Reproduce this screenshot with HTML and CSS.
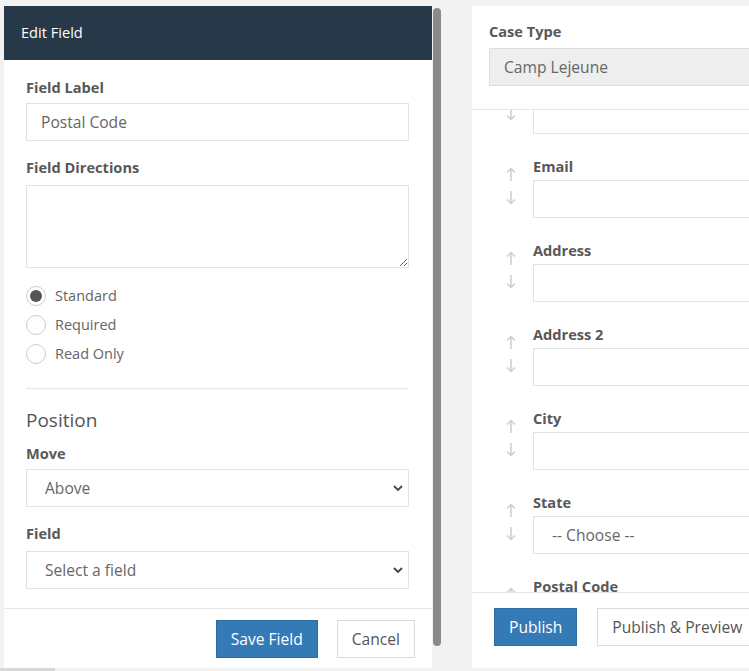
FILE: index.html
```html
<!DOCTYPE html>
<html>
<head>
<meta charset="utf-8">
<title>Edit Field</title>
<link rel="stylesheet" href="styles.css">
</head>
<body>
<div class="page">
  <div class="left-wrap">
    <div class="panel edit-panel">
      <div class="panel-head">Edit Field</div>
      <div class="panel-body">
        <label class="lbl">Field Label</label>
        <input class="ctl" type="text" value="Postal Code">
        <label class="lbl lbl-gap lbl-ta">Field Directions</label>
        <textarea class="ctl ta"></textarea>
        <div class="radios">
          <div class="radio"><span class="dot on"></span>Standard</div>
          <div class="radio"><span class="dot"></span>Required</div>
          <div class="radio"><span class="dot"></span>Read Only</div>
        </div>
        <div class="sep"></div>
        <div class="sect">Position</div>
        <label class="lbl lbl-move">Move</label>
        <div class="ctl sel"><span>Above</span><svg class="chev" width="10" height="6" viewBox="0 0 10 6"><polyline points="1,1 5,5 9,1" fill="none" stroke="#444" stroke-width="1.8"/></svg></div>
        <label class="lbl lbl-gap lbl-field">Field</label>
        <div class="ctl sel"><span>Select a field</span><svg class="chev" width="10" height="6" viewBox="0 0 10 6"><polyline points="1,1 5,5 9,1" fill="none" stroke="#444" stroke-width="1.8"/></svg></div>
      </div>
      <div class="panel-foot">
        <button class="btn btn-primary">Save Field</button>
        <button class="btn">Cancel</button>
      </div>
    </div>
    <div class="vscroll"><div class="thumb"></div></div>
  </div>

  <div class="panel form-panel">
    <div class="form-top">
      <label class="lbl lbl-case">Case Type</label>
      <div class="ctl ro"><span>Camp Lejeune</span></div>
    </div>
    <div class="form-scroll">
      <div class="rows">
        <div class="row">
          <div class="arrows">
            <svg class="arr" width="12" height="15" viewBox="0 0 12 15"><path d="M6 14V1.5M2 5.5L6 1.5l4 4" fill="none" stroke="#cdcdcd" stroke-width="1.5"/></svg>
            <svg class="arr" width="12" height="15" viewBox="0 0 12 15"><path d="M6 1v12.5M2 9.5l4 4 4-4" fill="none" stroke="#cdcdcd" stroke-width="1.5"/></svg>
          </div>
          <div class="fld"><label class="lbl">Phone</label><div class="ctl box"></div></div>
        </div>
        <div class="row">
          <div class="arrows">
            <svg class="arr" width="12" height="15" viewBox="0 0 12 15"><path d="M6 14V1.5M2 5.5L6 1.5l4 4" fill="none" stroke="#cdcdcd" stroke-width="1.5"/></svg>
            <svg class="arr" width="12" height="15" viewBox="0 0 12 15"><path d="M6 1v12.5M2 9.5l4 4 4-4" fill="none" stroke="#cdcdcd" stroke-width="1.5"/></svg>
          </div>
          <div class="fld"><label class="lbl">Email</label><div class="ctl box"></div></div>
        </div>
        <div class="row">
          <div class="arrows">
            <svg class="arr" width="12" height="15" viewBox="0 0 12 15"><path d="M6 14V1.5M2 5.5L6 1.5l4 4" fill="none" stroke="#cdcdcd" stroke-width="1.5"/></svg>
            <svg class="arr" width="12" height="15" viewBox="0 0 12 15"><path d="M6 1v12.5M2 9.5l4 4 4-4" fill="none" stroke="#cdcdcd" stroke-width="1.5"/></svg>
          </div>
          <div class="fld"><label class="lbl">Address</label><div class="ctl box"></div></div>
        </div>
        <div class="row">
          <div class="arrows">
            <svg class="arr" width="12" height="15" viewBox="0 0 12 15"><path d="M6 14V1.5M2 5.5L6 1.5l4 4" fill="none" stroke="#cdcdcd" stroke-width="1.5"/></svg>
            <svg class="arr" width="12" height="15" viewBox="0 0 12 15"><path d="M6 1v12.5M2 9.5l4 4 4-4" fill="none" stroke="#cdcdcd" stroke-width="1.5"/></svg>
          </div>
          <div class="fld"><label class="lbl">Address 2</label><div class="ctl box"></div></div>
        </div>
        <div class="row">
          <div class="arrows">
            <svg class="arr" width="12" height="15" viewBox="0 0 12 15"><path d="M6 14V1.5M2 5.5L6 1.5l4 4" fill="none" stroke="#cdcdcd" stroke-width="1.5"/></svg>
            <svg class="arr" width="12" height="15" viewBox="0 0 12 15"><path d="M6 1v12.5M2 9.5l4 4 4-4" fill="none" stroke="#cdcdcd" stroke-width="1.5"/></svg>
          </div>
          <div class="fld"><label class="lbl">City</label><div class="ctl box"></div></div>
        </div>
        <div class="row">
          <div class="arrows">
            <svg class="arr" width="12" height="15" viewBox="0 0 12 15"><path d="M6 14V1.5M2 5.5L6 1.5l4 4" fill="none" stroke="#cdcdcd" stroke-width="1.5"/></svg>
            <svg class="arr" width="12" height="15" viewBox="0 0 12 15"><path d="M6 1v12.5M2 9.5l4 4 4-4" fill="none" stroke="#cdcdcd" stroke-width="1.5"/></svg>
          </div>
          <div class="fld"><label class="lbl">State</label><div class="ctl box sel-r"><span>-- Choose --</span></div></div>
        </div>
        <div class="row">
          <div class="arrows">
            <svg class="arr" width="12" height="15" viewBox="0 0 12 15"><path d="M6 14V1.5M2 5.5L6 1.5l4 4" fill="none" stroke="#cdcdcd" stroke-width="1.5"/></svg>
            <svg class="arr" width="12" height="15" viewBox="0 0 12 15"><path d="M6 1v12.5M2 9.5l4 4 4-4" fill="none" stroke="#cdcdcd" stroke-width="1.5"/></svg>
          </div>
          <div class="fld"><label class="lbl">Postal Code</label><div class="ctl box"></div></div>
        </div>
      </div>
    </div>
    <div class="form-foot">
      <button class="btn btn-primary">Publish</button>
      <button class="btn">Publish &amp; Preview</button>
    </div>
  </div>
</div>
<div class="hscroll"></div>
</body>
</html>
```

FILE: styles.css
```css
html, body {
  margin: 0;
  padding: 0;
}
body {
  background: #f2f2f2;
  font-family: "Open Sans", "Liberation Sans", sans-serif;
  color: #666;
  width: 749px;
  height: 671px;
  overflow: hidden;
  position: relative;
}
.page {
  display: flex;
  padding: 6px 0 0 4px;
}
.left-wrap {
  display: flex;
  flex-shrink: 0;
}
.panel {
  background: #fff;
  height: 662px;
  display: flex;
  flex-direction: column;
  box-sizing: border-box;
}
.edit-panel {
  width: 428px;
}
.panel-head {
  height: 54px;
  box-sizing: border-box;
  background: #273848;
  color: #fff;
  font-size: 14.6px;
  line-height: 20px;
  padding: 16px 17px 0;
}
.panel-body {
  flex: 1;
  display: flex;
  flex-direction: column;
  padding: 17px 23px 0 22px;
}
.lbl {
  display: block;
  font-size: 14.6px;
  font-weight: 700;
  line-height: 20px;
  color: #585858;
  margin-bottom: 6px;
}
.lbl-gap {
  margin-top: 16px;
}
.lbl-ta {
  margin-bottom: 8px;
}
.lbl-move {
  margin-top: 9px;
}
.lbl-field {
  margin-bottom: 8px;
}
.ctl {
  box-sizing: border-box;
  height: 38px;
  border: 1px solid #e2e2e2;
  background: #fff;
  font-family: "Open Sans", "Liberation Sans", sans-serif;
  font-size: 15.6px;
  color: #666;
  padding: 0 14px;
  margin: 0;
  outline: none;
  width: 100%;
}
.ta {
  height: 83px;
  resize: vertical;
  padding: 6px 14px;
  display: block;
}
.radios {
  margin-top: 13px;
  display: flex;
  flex-direction: column;
}
.radio {
  height: 29px;
  display: flex;
  align-items: center;
  gap: 9px;
  font-size: 14.5px;
  color: #666;
}
.dot {
  width: 20px;
  height: 20px;
  box-sizing: border-box;
  border: 1px solid #cdcdcd;
  border-radius: 50%;
  display: flex;
  align-items: center;
  justify-content: center;
  background: #fff;
}
.dot.on::after {
  content: "";
  width: 12px;
  height: 12px;
  border-radius: 50%;
  background: #555;
}
.sep {
  height: 1px;
  background: #e6e6e6;
  margin-top: 20px;
}
.sect {
  margin-top: 17px;
  font-size: 19px;
  line-height: 28px;
  font-weight: 500;
  color: #555;
}
.sel {
  display: flex;
  align-items: center;
  justify-content: space-between;
  padding: 0 5px 0 18px;
}
.panel-foot {
  border-top: 1px solid #e6e6e6;
  padding: 11px 17px 10px;
  display: flex;
  justify-content: flex-end;
  gap: 19px;
}
.btn {
  height: 38px;
  box-sizing: border-box;
  border: 1px solid #dcdcdc;
  background: #fff;
  color: #555;
  font-family: "Open Sans", "Liberation Sans", sans-serif;
  font-size: 15.6px;
  padding: 0 14px;
  border-radius: 0;
  margin: 0;
}
.btn-primary {
  background: #337ab7;
  border-color: #2e6da4;
  color: #fff;
}
.vscroll {
  width: 10px;
  padding: 2px 1px 0;
  box-sizing: border-box;
}
.thumb {
  width: 8px;
  height: 638px;
  border-radius: 4px;
  background: #8a8a8a;
}
.form-panel {
  width: 420px;
  flex-shrink: 0;
  margin-left: 30px;
}
.form-top {
  padding: 15px 17px 23px;
  border-bottom: 1px solid #e6e6e6;
}
.lbl-case {
  margin-bottom: 7px;
}
.ro {
  background: #eee;
  border-color: #ddd;
  display: flex;
  align-items: center;
  white-space: nowrap;
}
.form-scroll {
  flex: 1;
  overflow: hidden;
}
.rows {
  margin-top: -38px;
}
.row {
  display: flex;
  padding-left: 17px;
  margin-bottom: 22px;
}
.arrows {
  width: 44px;
  flex-shrink: 0;
  display: flex;
  flex-direction: column;
  align-items: center;
  gap: 8px;
  padding-top: 11px;
}
.arr {
  display: block;
}
.fld {
  flex: 1;
}
.fld .lbl {
  margin-bottom: 4px;
}
.box {
  width: 100%;
}
.sel-r {
  display: flex;
  align-items: center;
  padding-left: 18px;
}
.form-foot {
  border-top: 1px solid #e6e6e6;
  padding: 15px 22px 22px;
  display: flex;
  gap: 20px;
}
.hscroll {
  position: absolute;
  left: 0;
  bottom: 0;
  width: 55px;
  height: 3px;
  background: #d8d8d8;
}
```
